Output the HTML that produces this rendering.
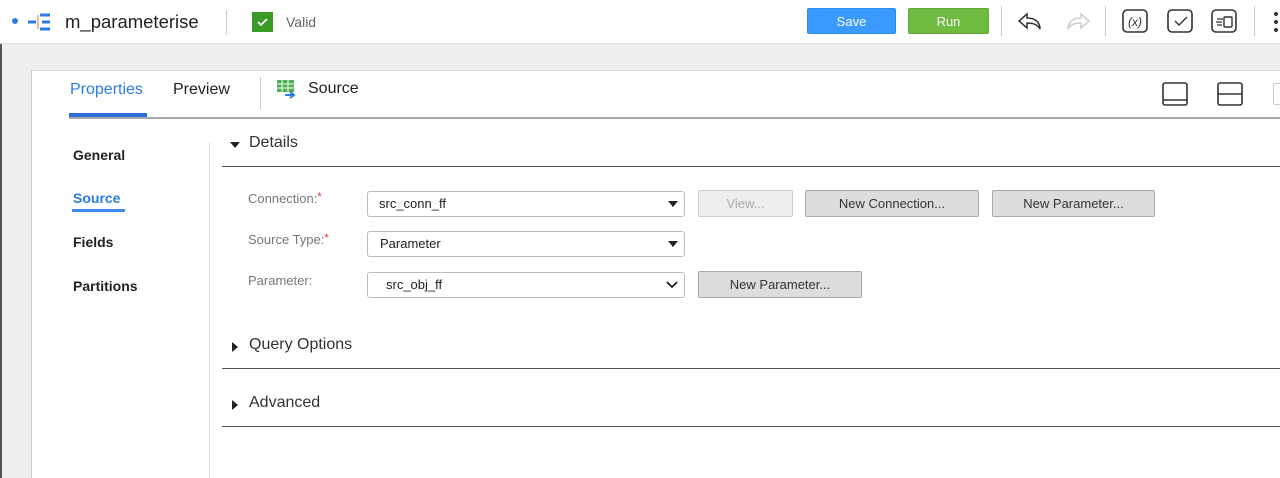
<!DOCTYPE html>
<html><head><meta charset="utf-8"><style>
*{box-sizing:border-box;margin:0;padding:0}
body{width:1280px;height:478px;overflow:hidden;background:#efefef;font-family:"Liberation Sans",sans-serif;position:relative}
.a{position:absolute}
.top{left:0;top:0;width:1280px;height:44px;background:#fff;border-bottom:1px solid #ddd}
.btn{position:absolute;height:26px;font-size:13px;text-align:center;line-height:26px;border-radius:2px}
.gb{position:absolute;height:27px;border:1px solid #aaa;background:#ddd;border-radius:2px;font-size:13px;color:#333;text-align:center;line-height:25px}
.sel{position:absolute;left:367px;width:318px;height:26px;border:1px solid #bbb;border-radius:3px;background:#fff;font-size:13px;color:#222;line-height:24px}
.lbl{position:absolute;left:248px;font-size:13px;color:#777}
.lbl b{color:#e22;font-weight:normal;font-size:11px;vertical-align:top}
.nav{position:absolute;left:73px;font-size:14px;font-weight:bold;color:#222}
.sec{position:absolute;left:222px;width:1058px;border-bottom:1px solid #555;font-size:16px;color:#333}
.tri{position:absolute;width:0;height:0}
</style></head><body>
<div class="a" style="left:0;top:44px;width:2px;height:434px;background:#555"></div>
<div class="a top">
 <div class="a" style="left:12px;top:18px;width:6px;height:6px;border-radius:3px;background:#2b7be4"></div>
 <svg class="a" style="left:26px;top:12px" width="28" height="20"><path d="M2 10h8" stroke="#2b7be4" stroke-width="3"/><path d="M12 3v14" stroke="#e8702a" stroke-width="1"/><path d="M14 3h10M16 10h8M14 17h10" stroke="#2b7be4" stroke-width="3"/></svg>
 <div class="a" style="left:65px;top:11px;font-size:18.5px;color:#222">m_parameterise</div>
 <div class="a" style="left:226px;top:10px;width:1px;height:25px;background:#ccc"></div>
 <div class="a" style="left:252px;top:12px;width:21px;height:20px;background:#3a9a26"><svg width="21" height="20"><path d="M6 10l3 3 6-6" stroke="#fff" stroke-width="1.8" fill="none"/></svg></div>
 <div class="a" style="left:286px;top:14px;font-size:14px;color:#666">Valid</div>
 <div class="btn" style="left:807px;top:8px;width:89px;background:#3a9aff;color:#fff;border:1px solid #2f8be8">Save</div>
 <div class="btn" style="left:908px;top:8px;width:81px;background:#6fbb40;color:#fff;border:1px solid #62a838">Run</div>
 <div class="a" style="left:1001px;top:6px;width:1px;height:30px;background:#ccc"></div>
 <svg class="a" style="left:1016px;top:10px" width="30" height="22"><path d="M11 4L3 11l8 7v-5c7 0 11 2 13 6 0-7-5-11-13-11z" fill="none" stroke="#333" stroke-width="1.5"/></svg>
 <svg class="a" style="left:1062px;top:10px" width="30" height="22"><path d="M19 4l8 7-8 7v-5c-7 0-11 2-13 6 0-7 5-11 13-11z" fill="none" stroke="#ccc" stroke-width="1.5"/></svg>
 <div class="a" style="left:1105px;top:6px;width:1px;height:30px;background:#ccc"></div>
 <svg class="a" style="left:1121px;top:8px" width="28" height="26"><rect x="2" y="2" width="24" height="22" rx="4" fill="none" stroke="#333" stroke-width="1.6"/><text x="7" y="18" font-size="12" font-style="italic" fill="#333" font-family="Liberation Sans">(x)</text></svg>
 <svg class="a" style="left:1166px;top:8px" width="28" height="26"><rect x="2" y="2" width="24" height="22" rx="4" fill="none" stroke="#333" stroke-width="1.6"/><path d="M9 13l4 4 8-8" stroke="#333" stroke-width="1.4" fill="none"/></svg>
 <svg class="a" style="left:1210px;top:8px" width="28" height="26"><rect x="2" y="2" width="24" height="22" rx="4" fill="none" stroke="#333" stroke-width="1.6"/><path d="M7 11h6M6 14h6M7 17h5" stroke="#333" stroke-width="1.2"/><rect x="14" y="9" width="8" height="10" rx="1" fill="none" stroke="#333" stroke-width="1.4"/></svg>
 <div class="a" style="left:1254px;top:6px;width:1px;height:30px;background:#ccc"></div>
 <div class="a" style="left:1274px;top:12px;width:4px;height:20px;border-left:4px dotted #333"></div>
</div>
<div class="a" style="left:31px;top:70px;width:1249px;height:408px;background:#fff;border-left:1px solid #ccc;border-top:1px solid #ddd"></div>
<div class="a" style="left:70px;top:81px;font-size:16px;color:#2b7be4">Properties</div>
<div class="a" style="left:69px;top:113px;width:78px;height:4px;background:#2b6fd9"></div>
<div class="a" style="left:173px;top:81px;font-size:16px;color:#222">Preview</div>
<div class="a" style="left:260px;top:77px;width:1px;height:32px;background:#ccc"></div>
<svg class="a" style="left:277px;top:80px" width="20" height="20"><rect x="0" y="0" width="17" height="12" fill="#4caf50"/><path d="M0 4h17M0 8h17M5 0v12M11 0v12" stroke="#fff" stroke-width="1"/><path d="M8 15h8M13 12l4 3-4 3" stroke="#2b7be4" stroke-width="2" fill="none"/></svg>
<div class="a" style="left:308px;top:80px;font-size:16px;color:#222">Source</div>
<svg class="a" style="left:1162px;top:82px" width="28" height="26"><rect x="1" y="1" width="24" height="22" rx="2" fill="none" stroke="#333" stroke-width="1.6"/><path d="M1 18h24" stroke="#333" stroke-width="1.6"/></svg>
<svg class="a" style="left:1217px;top:82px" width="28" height="26"><rect x="1" y="1" width="24" height="22" rx="2" fill="none" stroke="#333" stroke-width="1.6"/><path d="M1 12h24" stroke="#333" stroke-width="1.6"/></svg>
<div class="a" style="left:1273px;top:83px;width:10px;height:22px;border:1px solid #ccc;border-radius:2px"></div>
<div class="a" style="left:69px;top:117px;width:1211px;height:2px;background:#aaa"></div>
<div class="nav" style="top:147px">General</div>
<div class="nav" style="top:190px;color:#2b7be4">Source</div>
<div class="a" style="left:72px;top:209px;width:53px;height:3px;background:#3a8cf0"></div>
<div class="nav" style="top:234px">Fields</div>
<div class="nav" style="top:278px">Partitions</div>
<div class="a" style="left:209px;top:142px;width:1px;height:336px;background:#ddd"></div>
<div class="sec" style="top:134px;height:33px"><div class="tri" style="left:8px;top:8px;border-left:5px solid transparent;border-right:5px solid transparent;border-top:6px solid #222"></div><span style="position:absolute;left:27px;top:0">Details</span></div>
<div class="lbl" style="top:191px">Connection:<b>*</b></div>
<div class="lbl" style="top:232px">Source Type:<b>*</b></div>
<div class="lbl" style="top:273px">Parameter:</div>
<div class="sel" style="top:191px;padding-left:11px">src_conn_ff<div class="tri" style="left:300px;top:9px;border-left:5px solid transparent;border-right:5px solid transparent;border-top:6px solid #222"></div></div>
<div class="sel" style="top:231px;padding-left:12px">Parameter<div class="tri" style="left:300px;top:9px;border-left:5px solid transparent;border-right:5px solid transparent;border-top:6px solid #222"></div></div>
<div class="sel" style="top:272px;padding-left:18px">src_obj_ff<svg style="position:absolute;left:298px;top:8px" width="12" height="8"><path d="M1 1l5 5 5-5" stroke="#222" stroke-width="1.8" fill="none"/></svg></div>
<div class="gb" style="left:698px;top:190px;width:95px;background:#eee;border-color:#ccc;color:#aaa">View...</div>
<div class="gb" style="left:805px;top:190px;width:174px">New Connection...</div>
<div class="gb" style="left:992px;top:190px;width:163px">New Parameter...</div>
<div class="gb" style="left:698px;top:271px;width:164px">New Parameter...</div>
<div class="sec" style="top:336px;height:33px"><div class="tri" style="left:10px;top:6px;border-top:5px solid transparent;border-bottom:5px solid transparent;border-left:6px solid #222"></div><span style="position:absolute;left:27px;top:0">Query Options</span></div>
<div class="sec" style="top:394px;height:33px"><div class="tri" style="left:10px;top:6px;border-top:5px solid transparent;border-bottom:5px solid transparent;border-left:6px solid #222"></div><span style="position:absolute;left:27px;top:0">Advanced</span></div>
</body></html>
